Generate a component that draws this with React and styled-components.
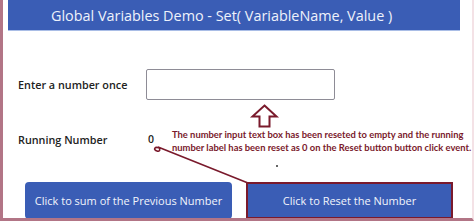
import React from "react";
import styled, { createGlobalStyle } from "styled-components";

const Global = createGlobalStyle`
    html, body {
        margin: 0;
        padding: 0;
        background: #fff;
    }
`;

const ui = `"Open Sans", "Noto Sans", sans-serif`;
const blue = "#3a5db5";
const wine = "#7a1a2c";

export default function App() {
    return (
        <>
            <Global />
            <Page>
                <Header>Global Variables Demo - Set( VariableName, Value )</Header>
                <Row>
                    <Label>Enter a number once</Label>
                    <NumberInput type="text" />
                </Row>
                <RunningRow>
                    <Label>Running Number</Label>
                    <Value>0</Value>
                    <Note>
                        The number input text box has been reseted to empty and the running
                        <br />
                        number label has been reset as 0 on the Reset button button click event.
                    </Note>
                </RunningRow>
                <Buttons>
                    <Button>Click to sum of the Previous Number</Button>
                    <Button $marked>Click to Reset the Number</Button>
                </Buttons>
                <Overlay width="474" height="221" viewBox="0 0 474 221">
                    <path
                        d="M264.5 105.5 L276.5 116.5 L269.5 116.5 L269.5 126.5 L259.5 126.5 L259.5 116.5 L252.5 116.5 Z"
                        fill="#fff"
                        stroke={wine}
                        strokeWidth="2"
                        strokeLinejoin="miter"
                    />
                    <path
                        d="M160 148 C154 146 153 150 157 151 C160 152 161 149 158 147 L248 183"
                        fill="none"
                        stroke={wine}
                        strokeWidth="1.6"
                    />
                    <circle cx="277" cy="166" r="1" fill="#333" />
                </Overlay>
            </Page>
        </>
    );
}

const Page = styled.div`
    position: relative;
    width: 474px;
    height: 221px;
    box-sizing: border-box;
    border-left: 3px solid #b27586;
    border-bottom: 3px solid #b27586;
    border-right: 2px solid #f4e2e6;
    background: #fff;
    display: flex;
    flex-direction: column;
    overflow: hidden;
`;

const Header = styled.div`
    margin-left: 5px;
    width: 452px;
    height: 31px;
    box-sizing: border-box;
    padding-left: 43px;
    background: ${blue};
    border-bottom: 1px solid #a9bde6;
    color: #eef2fb;
    font-family: ${ui};
    font-size: 14.4px;
    line-height: 31px;
    white-space: nowrap;
`;

const Row = styled.div`
    display: flex;
    align-items: center;
    margin-top: 38px;
    padding-left: 15px;
    height: 31px;
`;

const Label = styled.div`
    width: 128px;
    flex-shrink: 0;
    font-family: ${ui};
    font-size: 10.8px;
    font-weight: 600;
    color: #222;
    white-space: nowrap;
`;

const NumberInput = styled.input`
    width: 189px;
    height: 31px;
    box-sizing: border-box;
    border: 1.5px solid #8e8c96;
    border-radius: 2px;
    background: #fff;
    padding: 0;
    outline: none;
`;

const RunningRow = styled.div`
    display: flex;
    align-items: flex-start;
    margin-top: 29px;
    padding-left: 15px;
    height: 24px;

    & > ${Label} {
        padding-top: 3px;
    }
`;

const Value = styled.div`
    width: 24px;
    flex-shrink: 0;
    padding-left: 2px;
    padding-top: 3px;
    font-family: ${ui};
    font-size: 10.5px;
    font-weight: 600;
    color: #222;
`;

const Note = styled.div`
    font-family: Lato, "Noto Sans", sans-serif;
    font-size: 9.4px;
    font-weight: 700;
    line-height: 12.5px;
    color: ${wine};
    white-space: nowrap;
`;

const Buttons = styled.div`
    display: flex;
    gap: 14px;
    margin-top: 29px;
    padding-left: 22px;
`;

const Button = styled.button`
    width: 207px;
    height: 37px;
    box-sizing: border-box;
    border: ${(p) => (p.$marked ? `2px solid ${wine}` : "none")};
    border-radius: ${(p) => (p.$marked ? "0" : "4px")};
    background: ${blue};
    color: #f2f5fc;
    font-family: ${ui};
    font-size: 11px;
    padding: 0;
    white-space: nowrap;
    cursor: pointer;
`;

const Overlay = styled.svg`
    position: absolute;
    left: -3px;
    top: 0;
    pointer-events: none;
`;
